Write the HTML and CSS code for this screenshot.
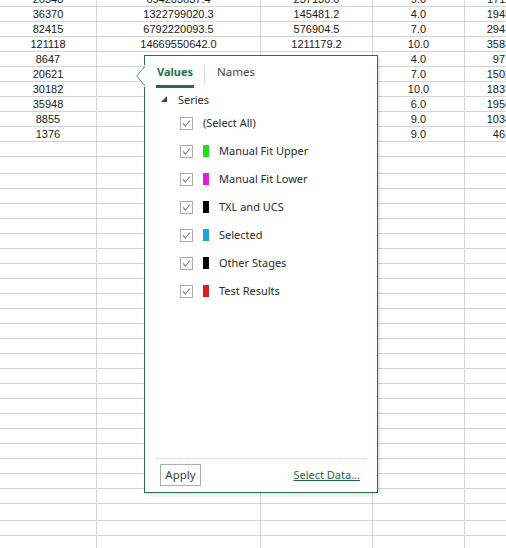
FILE: index.html
```html
<!DOCTYPE html>
<html>
<head>
<meta charset="utf-8">
<link rel="stylesheet" href="styles.css">
</head>
<body>
<div class="sheet">
  <div class="row"><div class="c">26348</div><div class="c">694203637.4</div><div class="c">237130.0</div><div class="c">9.0</div><div class="c">1711.7</div><div class="c"></div></div>
  <div class="row"><div class="c">36370</div><div class="c">1322799020.3</div><div class="c">145481.2</div><div class="c">4.0</div><div class="c">1945.3</div><div class="c"></div></div>
  <div class="row"><div class="c">82415</div><div class="c">6792220093.5</div><div class="c">576904.5</div><div class="c">7.0</div><div class="c">2947.6</div><div class="c"></div></div>
  <div class="row"><div class="c">121118</div><div class="c">14669550642.0</div><div class="c">1211179.2</div><div class="c">10.0</div><div class="c">3583.9</div><div class="c"></div></div>
  <div class="row"><div class="c">8647</div><div class="c"></div><div class="c"></div><div class="c">4.0</div><div class="c">97.2</div><div class="c"></div></div>
  <div class="row"><div class="c">20621</div><div class="c"></div><div class="c"></div><div class="c">7.0</div><div class="c">1502.4</div><div class="c"></div></div>
  <div class="row"><div class="c">30182</div><div class="c"></div><div class="c"></div><div class="c">10.0</div><div class="c">1837.6</div><div class="c"></div></div>
  <div class="row"><div class="c">35948</div><div class="c"></div><div class="c"></div><div class="c">6.0</div><div class="c">1956.1</div><div class="c"></div></div>
  <div class="row"><div class="c">8855</div><div class="c"></div><div class="c"></div><div class="c">9.0</div><div class="c">1034.8</div><div class="c"></div></div>
  <div class="row"><div class="c">1376</div><div class="c"></div><div class="c"></div><div class="c">9.0</div><div class="c">46.3</div><div class="c"></div></div>
  <div class="row"><div class="c"></div><div class="c"></div><div class="c"></div><div class="c"></div><div class="c"></div><div class="c"></div></div>
  <div class="row tall"><div class="c"></div><div class="c"></div><div class="c"></div><div class="c"></div><div class="c"></div><div class="c"></div></div>
  <div class="row"><div class="c"></div><div class="c"></div><div class="c"></div><div class="c"></div><div class="c"></div><div class="c"></div></div>
  <div class="row"><div class="c"></div><div class="c"></div><div class="c"></div><div class="c"></div><div class="c"></div><div class="c"></div></div>
  <div class="row"><div class="c"></div><div class="c"></div><div class="c"></div><div class="c"></div><div class="c"></div><div class="c"></div></div>
  <div class="row"><div class="c"></div><div class="c"></div><div class="c"></div><div class="c"></div><div class="c"></div><div class="c"></div></div>
  <div class="row"><div class="c"></div><div class="c"></div><div class="c"></div><div class="c"></div><div class="c"></div><div class="c"></div></div>
  <div class="row"><div class="c"></div><div class="c"></div><div class="c"></div><div class="c"></div><div class="c"></div><div class="c"></div></div>
  <div class="row"><div class="c"></div><div class="c"></div><div class="c"></div><div class="c"></div><div class="c"></div><div class="c"></div></div>
  <div class="row"><div class="c"></div><div class="c"></div><div class="c"></div><div class="c"></div><div class="c"></div><div class="c"></div></div>
  <div class="row"><div class="c"></div><div class="c"></div><div class="c"></div><div class="c"></div><div class="c"></div><div class="c"></div></div>
  <div class="row"><div class="c"></div><div class="c"></div><div class="c"></div><div class="c"></div><div class="c"></div><div class="c"></div></div>
  <div class="row"><div class="c"></div><div class="c"></div><div class="c"></div><div class="c"></div><div class="c"></div><div class="c"></div></div>
  <div class="row"><div class="c"></div><div class="c"></div><div class="c"></div><div class="c"></div><div class="c"></div><div class="c"></div></div>
  <div class="row"><div class="c"></div><div class="c"></div><div class="c"></div><div class="c"></div><div class="c"></div><div class="c"></div></div>
  <div class="row"><div class="c"></div><div class="c"></div><div class="c"></div><div class="c"></div><div class="c"></div><div class="c"></div></div>
  <div class="row"><div class="c"></div><div class="c"></div><div class="c"></div><div class="c"></div><div class="c"></div><div class="c"></div></div>
  <div class="row"><div class="c"></div><div class="c"></div><div class="c"></div><div class="c"></div><div class="c"></div><div class="c"></div></div>
  <div class="row"><div class="c"></div><div class="c"></div><div class="c"></div><div class="c"></div><div class="c"></div><div class="c"></div></div>
  <div class="row"><div class="c"></div><div class="c"></div><div class="c"></div><div class="c"></div><div class="c"></div><div class="c"></div></div>
  <div class="row"><div class="c"></div><div class="c"></div><div class="c"></div><div class="c"></div><div class="c"></div><div class="c"></div></div>
  <div class="row"><div class="c"></div><div class="c"></div><div class="c"></div><div class="c"></div><div class="c"></div><div class="c"></div></div>
  <div class="row"><div class="c"></div><div class="c"></div><div class="c"></div><div class="c"></div><div class="c"></div><div class="c"></div></div>
  <div class="row"><div class="c"></div><div class="c"></div><div class="c"></div><div class="c"></div><div class="c"></div><div class="c"></div></div>
  <div class="row tall"><div class="c"></div><div class="c"></div><div class="c"></div><div class="c"></div><div class="c"></div><div class="c"></div></div>
  <div class="row"><div class="c"></div><div class="c"></div><div class="c"></div><div class="c"></div><div class="c"></div><div class="c"></div></div>
  <div class="row"><div class="c"></div><div class="c"></div><div class="c"></div><div class="c"></div><div class="c"></div><div class="c"></div></div>
</div>

<div class="popup">
  <svg class="arrow" width="10" height="22" viewBox="0 0 10 22">
    <rect x="8" y="0" width="2" height="22" fill="#fff"/>
    <polygon points="9,0.5 0.5,11 9,21.5" fill="#fff"/>
    <polyline points="9.5,0.5 0.8,11 9.5,21.5" fill="none" stroke="#6f8f7c" stroke-width="1"/>
  </svg>
  <div class="tabs">
    <span class="tab active">Values</span>
    <span class="tab-sep"></span>
    <span class="tab">Names</span>
  </div>
  <div class="tree">
    <div class="node">
      <svg class="tri" width="6" height="6" viewBox="0 0 6 6"><polygon points="6,0 6,6 0,6" fill="#444"/></svg>
      <span>Series</span>
    </div>
    <ul class="items">
      <li class="item">
        <span class="cb"><svg width="11" height="11" viewBox="0 0 11 11"><polyline points="2,5.5 4.5,8 9,2.5" fill="none" stroke="#808080" stroke-width="1.1"/></svg></span>
        <span class="label">(Select All)</span>
      </li>
      <li class="item">
        <span class="cb"><svg width="11" height="11" viewBox="0 0 11 11"><polyline points="2,5.5 4.5,8 9,2.5" fill="none" stroke="#808080" stroke-width="1.1"/></svg></span>
        <span class="swatch sw-green"></span>
        <span class="label">Manual Fit Upper</span>
      </li>
      <li class="item">
        <span class="cb"><svg width="11" height="11" viewBox="0 0 11 11"><polyline points="2,5.5 4.5,8 9,2.5" fill="none" stroke="#808080" stroke-width="1.1"/></svg></span>
        <span class="swatch sw-magenta"></span>
        <span class="label">Manual Fit Lower</span>
      </li>
      <li class="item">
        <span class="cb"><svg width="11" height="11" viewBox="0 0 11 11"><polyline points="2,5.5 4.5,8 9,2.5" fill="none" stroke="#808080" stroke-width="1.1"/></svg></span>
        <span class="swatch sw-black"></span>
        <span class="label">TXL and UCS</span>
      </li>
      <li class="item">
        <span class="cb"><svg width="11" height="11" viewBox="0 0 11 11"><polyline points="2,5.5 4.5,8 9,2.5" fill="none" stroke="#808080" stroke-width="1.1"/></svg></span>
        <span class="swatch sw-cyan"></span>
        <span class="label">Selected</span>
      </li>
      <li class="item">
        <span class="cb"><svg width="11" height="11" viewBox="0 0 11 11"><polyline points="2,5.5 4.5,8 9,2.5" fill="none" stroke="#808080" stroke-width="1.1"/></svg></span>
        <span class="swatch sw-black"></span>
        <span class="label">Other Stages</span>
      </li>
      <li class="item">
        <span class="cb"><svg width="11" height="11" viewBox="0 0 11 11"><polyline points="2,5.5 4.5,8 9,2.5" fill="none" stroke="#808080" stroke-width="1.1"/></svg></span>
        <span class="swatch sw-red"></span>
        <span class="label">Test Results</span>
      </li>
    </ul>
  </div>
  <div class="footer">
    <button class="apply" type="button">Apply</button>
    <a class="link" href="#">Select Data...</a>
  </div>
</div>
</body>
</html>
```

FILE: styles.css
```css
html, body {
  margin: 0;
  padding: 0;
}
body {
  width: 506px;
  height: 548px;
  overflow: hidden;
  position: relative;
  background: #ffffff;
  font-family: "Liberation Sans", Arial, sans-serif;
}

/* spreadsheet grid */
.sheet {
  margin-top: -8px;
}
.row {
  display: grid;
  grid-template-columns: 97px 164px 112px 92px 78px 120px;
  height: 15px;
}
.row.tall {
  height: 17px;
}
.c {
  box-sizing: border-box;
  border-right: 1px solid #d4d4d4;
  border-bottom: 1px solid #d4d4d4;
  text-align: center;
  font-size: 11px;
  line-height: 14px;
  color: #1a1a1a;
  white-space: nowrap;
  overflow: hidden;
}

/* filter popup */
.popup {
  position: absolute;
  left: 144px;
  top: 55px;
  width: 234px;
  height: 438px;
  box-sizing: border-box;
  border: 1px solid #2d6a47;
  background: #ffffff;
  box-shadow: 2px 2px 3px rgba(33, 115, 70, 0.18);
  display: flex;
  flex-direction: column;
  font-family: "Noto Sans", "Open Sans", sans-serif;
  font-size: 11px;
  color: #2b2b2b;
}
.arrow {
  position: absolute;
  left: -9px;
  top: 9px;
}

.tabs {
  display: flex;
  align-items: flex-start;
  padding-left: 11px;
  height: 35px;
}
.tab {
  display: block;
  padding: 8px 1px 5px;
  line-height: 16px;
  font-size: 11.5px;
  color: #444;
  border-bottom: 3px solid transparent;
}
.tab.active {
  font-weight: bold;
  font-size: 11px;
  color: #217346;
  border-bottom-color: #2a6b47;
}
.tab-sep {
  display: block;
  width: 1px;
  height: 18px;
  margin: 9px 11px 0 10px;
  background: #dadada;
}

.tree {
  flex: 1;
}
.node {
  display: flex;
  align-items: center;
  height: 16px;
  padding-left: 16px;
}
.tri {
  display: block;
  margin-right: 11px;
}
.items {
  list-style: none;
  margin: 2px 0 0;
  padding: 0 0 0 35px;
}
.item {
  display: flex;
  align-items: center;
  height: 28px;
}
.cb {
  box-sizing: border-box;
  width: 13px;
  height: 13px;
  border: 1px solid #ababab;
  background: #fff;
  display: flex;
  margin-right: 10px;
}
.cb svg {
  display: block;
}
.swatch {
  width: 6px;
  height: 12px;
  margin-right: 10px;
}
.sw-green { background: #1fe01f; }
.sw-magenta { background: #e01fe0; }
.sw-black { background: #000000; }
.sw-cyan { background: #1fa6d6; }
.sw-red { background: #d61f1f; }
.label {
  line-height: 16px;
  white-space: nowrap;
}

.footer {
  display: flex;
  align-items: flex-start;
  justify-content: space-between;
  margin: 0 12px 0 11px;
  border-top: 1px dotted #c8c8c8;
  padding: 5px 5px 7px 4px;
  height: 34px;
  box-sizing: border-box;
}
.apply {
  box-sizing: border-box;
  width: 41px;
  height: 22px;
  padding: 0;
  border: 1px solid #adadad;
  background: #fdfdfd;
  font-family: "Noto Sans", "Open Sans", sans-serif;
  font-size: 11.5px;
  color: #444;
  line-height: 18px;
}
.link {
  margin-top: 3px;
  line-height: 16px;
  color: #1f6b42;
  text-decoration: underline;
  font-size: 11px;
}
```
